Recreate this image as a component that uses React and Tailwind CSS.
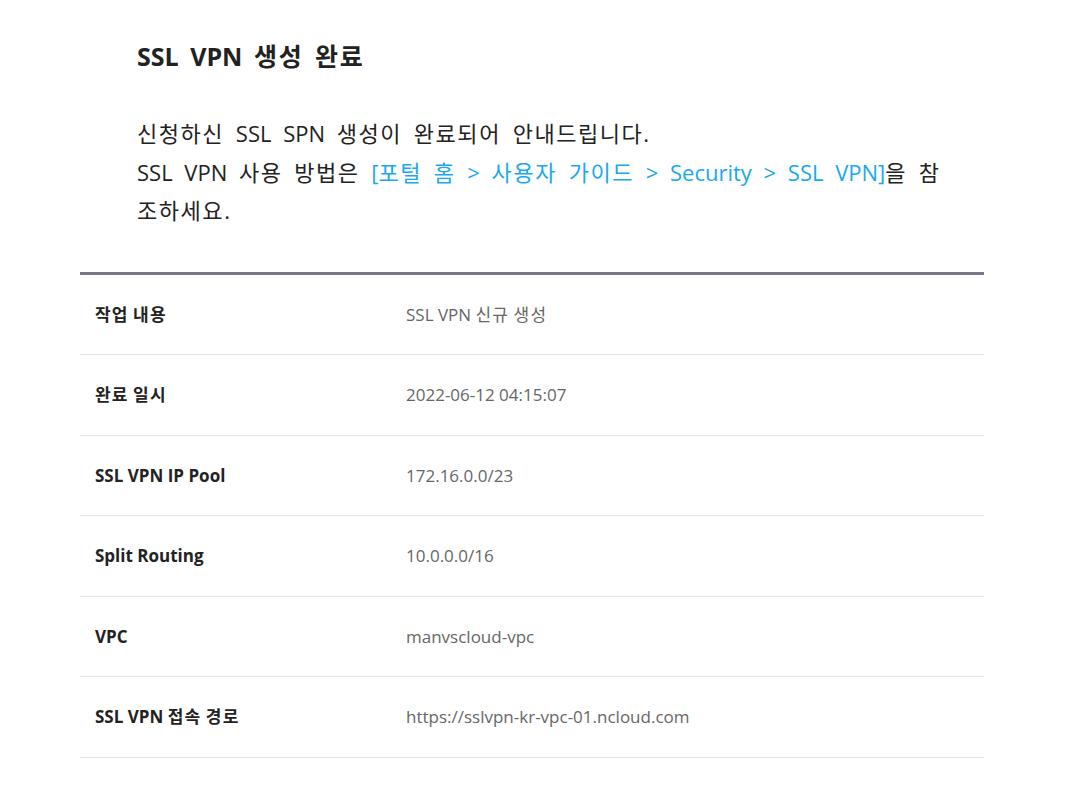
import React from "react";

const rows = [
  { label: "작업 내용", value: "SSL VPN 신규 생성" },
  { label: "완료 일시", value: "2022-06-12 04:15:07" },
  { label: "SSL VPN IP Pool", value: "172.16.0.0/23" },
  { label: "Split Routing", value: "10.0.0.0/16" },
  { label: "VPC", value: "manvscloud-vpc" },
  { label: "SSL VPN 접속 경로", value: "https://sslvpn-kr-vpc-01.ncloud.com" },
];

// hangul runs get a bit of extra tracking so they sit as wide as the original font
function Ko({ children }) {
  return String(children)
    .split(/([\uAC00-\uD7A3]+)/)
    .map((s, i) =>
      /[\uAC00-\uD7A3]/.test(s) ? (
        <span key={i} className="tracking-[0.07em]">
          {s}
        </span>
      ) : (
        s
      )
    );
}

export default function App() {
  return (
    <div
      className="min-h-screen bg-white text-[#222]"
      style={{ fontFamily: '"Open Sans", "Noto Sans CJK KR", sans-serif' }}
    >
      <div className="w-[904px] ml-[80px] pt-[38px]">
        {/* Heading */}
        <div className="pl-[57px]">
          <h1 className="text-[25px] font-bold leading-[36px] [word-spacing:5px]">
            <Ko>SSL VPN 생성 완료</Ko>
          </h1>
          <p className="mt-[40px] w-[805px] text-[22px] leading-[38.5px] text-[#222] [word-spacing:6px]">
            <Ko>신청하신 SSL SPN 생성이 완료되어 안내드립니다.</Ko>
            <br />
            <Ko>SSL VPN 사용 방법은</Ko>{" "}
            <span className="text-[#19a9ec]">
              <Ko>[포털 홈 &gt; 사용자 가이드 &gt; Security &gt; SSL VPN]</Ko>
            </span>
            <Ko>을 참조하세요.</Ko>
          </p>
        </div>

        {/* Result table */}
        <div className="mt-[42px] border-t-[3px] border-[#777788]">
          {rows.map((r) => (
            <div key={r.label} className="flex items-center h-[80.5px] border-b border-[#e4e6ee]">
              <div className="w-[326px] pl-[15px] text-[17px] font-bold text-[#222]">
                <Ko>{r.label}</Ko>
              </div>
              <div className="text-[17px] text-[#666]">
                <Ko>{r.value}</Ko>
              </div>
            </div>
          ))}
        </div>
      </div>
    </div>
  );
}
